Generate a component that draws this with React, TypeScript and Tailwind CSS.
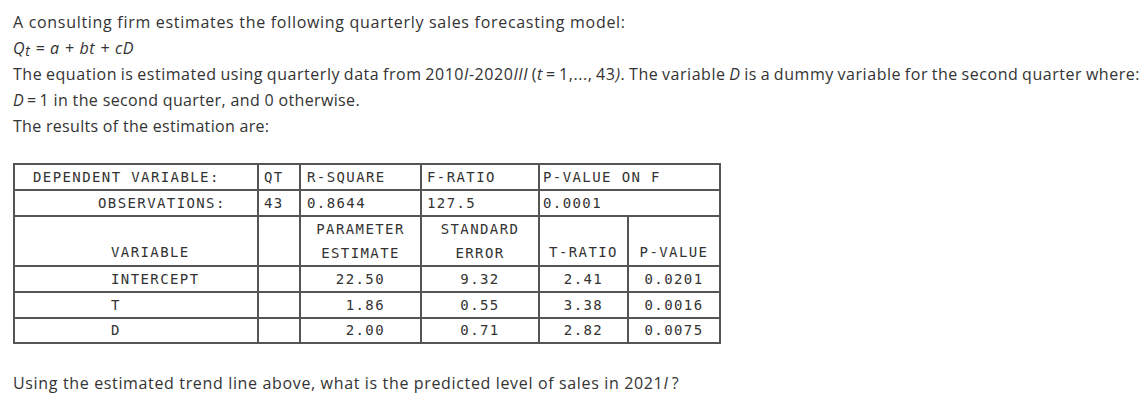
const mono = "font-['DejaVu_Sans_Mono',monospace] text-[14px] tracking-[1.4px] text-[#333]";
const cell = "border-2 border-[#555] p-0 whitespace-nowrap";

const rows = [
  { v: "INTERCEPT", e: "22.50", s: "9.32", t: "2.41", p: "0.0201" },
  { v: "T", e: "1.86", s: "0.55", t: "3.38", p: "0.0016" },
  { v: "D", e: "2.00", s: "0.71", t: "2.82", p: "0.0075" },
];

function ResultsTable() {
  return (
    <table className={`${mono} border-collapse table-fixed w-[706px]`}>
      <colgroup>
        <col className="w-[244px]" />
        <col className="w-[42px]" />
        <col className="w-[121px]" />
        <col className="w-[118px]" />
        <col className="w-[89px]" />
        <col className="w-[92px]" />
      </colgroup>
      <tbody>
        <tr className="h-[26px]">
          <td className={`${cell} pl-[18px]`}>DEPENDENT VARIABLE:</td>
          <td className={`${cell} pl-[5px]`}>QT</td>
          <td className={`${cell} pl-[6px]`}>R-SQUARE</td>
          <td className={`${cell} pl-[5px]`}>F-RATIO</td>
          <td className={`${cell} pl-[3px]`} colSpan={2}>P-VALUE ON F</td>
        </tr>
        <tr className="h-[26px]">
          <td className={`${cell} pl-[83px]`}>OBSERVATIONS:</td>
          <td className={`${cell} pl-[5px]`}>43</td>
          <td className={`${cell} pl-[6px]`}>0.8644</td>
          <td className={`${cell} pl-[5px]`}>127.5</td>
          <td className={`${cell} pl-[3px]`} colSpan={2}>0.0001</td>
        </tr>
        <tr className="h-[50px] leading-[24px]">
          <td className={`${cell} pl-[96px] align-bottom pb-[1px]`}>VARIABLE</td>
          <td className={cell}></td>
          <td className={`${cell} text-center`}>
            PARAMETER
            <br />
            ESTIMATE
          </td>
          <td className={`${cell} text-center`}>
            STANDARD
            <br />
            ERROR
          </td>
          <td className={`${cell} text-center align-bottom pb-[1px]`}>T-RATIO</td>
          <td className={`${cell} text-center align-bottom pb-[1px]`}>P-VALUE</td>
        </tr>
        {rows.map((r, i) => (
          <tr key={r.v} className={i === 2 ? "h-[25px]" : "h-[26px]"}>
            <td className={`${cell} pl-[96px]`}>{r.v}</td>
            <td className={cell}></td>
            <td className={`${cell} text-right pr-[35px]`}>{r.e}</td>
            <td className={`${cell} text-center`}>{r.s}</td>
            <td className={`${cell} text-center`}>{r.t}</td>
            <td className={`${cell} text-center`}>{r.p}</td>
          </tr>
        ))}
      </tbody>
    </table>
  );
}

export default function App() {
  return (
    <div className="min-h-screen bg-white px-[13px] pt-[9px] font-['Open_Sans',sans-serif] text-[16px] tracking-[0.7px] text-[#333]">
      <div className="leading-[26px]">
        <p>A consulting firm estimates the following quarterly sales forecasting model:</p>
        <p className="italic">
          Q<sub className="text-[14px] relative top-[2px]">t</sub> = a + bt + cD
        </p>
        <p className="whitespace-nowrap tracking-[0.55px] [word-spacing:-1px]">
          The equation is estimated using quarterly data from 2010<i>I</i>-2020<i>III</i> (<i>t</i>&thinsp;=&thinsp;1,..., 43<i>)</i>. The
          variable <i>D</i> is a dummy variable for the second quarter where:
        </p>
        <p className="tracking-[0.35px]">
          <i>D</i>&thinsp;=&thinsp;1 in the second quarter, and 0 otherwise.
        </p>
        <p className="tracking-[0.3px]">The results of the estimation are:</p>
      </div>
      <div className="mt-[24px]">
        <ResultsTable />
      </div>
      <p className="mt-[26px] leading-[26px] tracking-[0.65px]">
        Using the estimated trend line above, what is the predicted level of sales in 2021<i>I</i>&thinsp;?
      </p>
    </div>
  );
}
